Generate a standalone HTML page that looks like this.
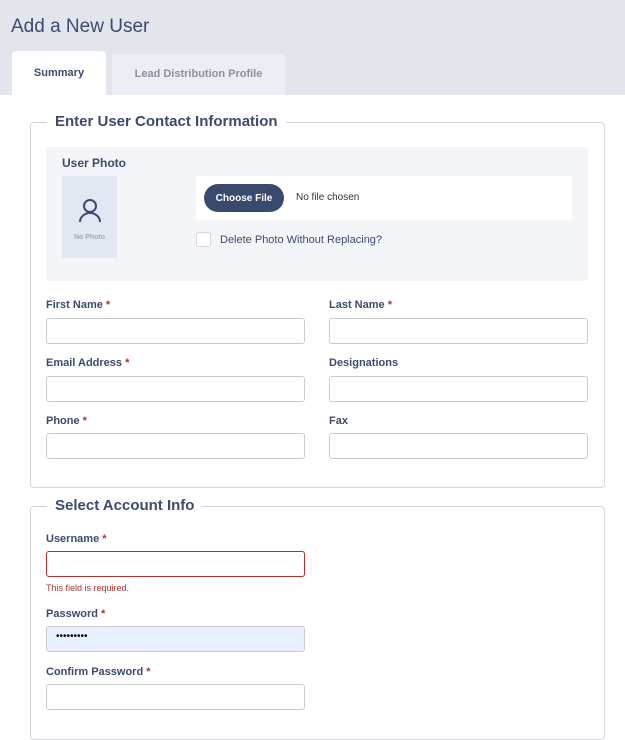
<!DOCTYPE html>
<html><head><style>
*{box-sizing:border-box;margin:0;padding:0}
body{width:625px;height:740px;overflow:hidden;background:#fff;font-family:"Liberation Sans",sans-serif;position:relative}
.hdr{position:absolute;left:0;top:0;width:625px;height:95px;background:#e3e5ed}
h1{position:absolute;left:11px;top:16px;font-size:19px;font-weight:normal;color:#3c4a6e}
.tab{position:absolute;font-size:11px;font-weight:bold;text-align:center;border-radius:4px 4px 0 0}
.t1{left:12px;top:51px;width:94px;height:44px;background:#fff;color:#3c4a6e;line-height:44px}
.t2{left:112px;top:54px;width:173px;height:41px;background:#eceef3;color:#8a90a0;line-height:40px}
.fs{position:absolute;left:30px;width:575px;border:1px solid #d4d6db;border-radius:4px}
.lg{position:absolute;left:16px;top:-10px;background:#fff;padding:0 8px;font-size:15px;font-weight:bold;color:#3c4a6e}
.lbl{position:absolute;font-size:11px;font-weight:bold;color:#3c4a6e}
.lbl b{color:#a33}
.in{position:absolute;width:259px;height:26px;border:1px solid #c8cbd0;border-radius:3px;background:#fff}
</style></head><body>
<div class="hdr"></div>
<h1>Add a New User</h1>
<div class="tab t1">Summary</div>
<div class="tab t2">Lead Distribution Profile</div>

<div class="fs" style="top:122px;height:366px"><div class="lg">Enter User Contact Information</div></div>
<div style="position:absolute;left:46px;top:147px;width:542px;height:134px;background:#f4f5f8;border-radius:3px"></div>
<div class="lbl" style="left:62px;top:156px;font-size:12px">User Photo</div>
<div style="position:absolute;left:62px;top:176px;width:55px;height:82px;background:#e2e7f1">
<svg width="55" height="50" viewBox="0 0 55 50"><circle cx="28" cy="30" r="6" fill="none" stroke="#3c4a6e" stroke-width="2"/><path d="M18 46 a10 9 0 0 1 20 0" fill="none" stroke="#3c4a6e" stroke-width="2"/></svg>
<div style="font-size:7px;font-weight:bold;color:#a4a9b5;text-align:center;margin-top:3px">No Photo</div></div>
<div style="position:absolute;left:196px;top:176px;width:376px;height:44px;background:#fff;border-radius:3px"></div>
<div style="position:absolute;left:204px;top:184px;width:80px;height:28px;background:#3a4a6f;border-radius:14px;color:#fff;font-size:10px;font-weight:bold;display:flex;align-items:center;justify-content:center">Choose File</div>
<div style="position:absolute;left:296px;top:192px;font-size:10px;color:#333">No file chosen</div>
<div style="position:absolute;left:196px;top:232px;width:15px;height:15px;border:1px solid #d4d6db;border-radius:3px;background:#fff"></div>
<div style="position:absolute;left:220px;top:234px;font-size:11px;color:#3c4a6e">Delete Photo Without Replacing?</div>

<div class="lbl" style="left:46px;top:299px">First Name <b>*</b></div>
<div class="lbl" style="left:329px;top:299px">Last Name <b>*</b></div>
<div class="in" style="left:46px;top:318px"></div><div class="in" style="left:329px;top:318px"></div>
<div class="lbl" style="left:46px;top:357px">Email Address <b>*</b></div>
<div class="lbl" style="left:329px;top:357px">Designations</div>
<div class="in" style="left:46px;top:376px"></div><div class="in" style="left:329px;top:376px"></div>
<div class="lbl" style="left:46px;top:415px">Phone <b>*</b></div>
<div class="lbl" style="left:329px;top:415px">Fax</div>
<div class="in" style="left:46px;top:433px"></div><div class="in" style="left:329px;top:433px"></div>

<div class="fs" style="top:506px;height:234px"><div class="lg">Select Account Info</div></div>
<div class="lbl" style="left:46px;top:533px">Username <b>*</b></div>
<div class="in" style="left:46px;top:551px;border-color:#a33"></div>
<div style="position:absolute;left:46px;top:583px;font-size:9px;color:#a33">This field is required.</div>
<div class="lbl" style="left:46px;top:608px">Password <b>*</b></div>
<div class="in" style="left:46px;top:626px;background:#e8f0fe;font-size:10px;line-height:20px;padding-left:9px">•••••••••</div>
<div class="lbl" style="left:46px;top:666px">Confirm Password <b>*</b></div>
<div class="in" style="left:46px;top:684px"></div>
</body></html>
